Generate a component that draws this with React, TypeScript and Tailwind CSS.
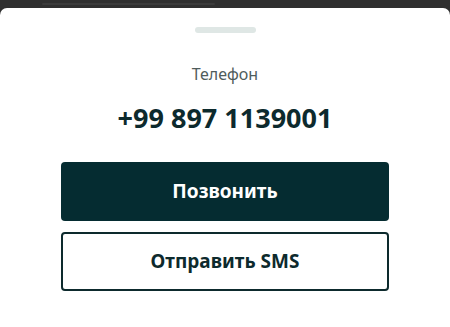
export default function App() {
  return (
    <div
      className="flex h-[327px] w-[450px] flex-col overflow-hidden bg-[#2f2f2f]"
      style={{ fontFamily: '"Noto Sans", sans-serif' }}
    >
      <div className="flex h-[8px] shrink-0 items-start px-[42px] pt-[3px]">
        <div className="h-[2px] w-[173px] rounded-full bg-[#3b3b3b]" />
      </div>
      <div className="flex flex-1 flex-col items-center rounded-t-[7px] bg-white px-[61px]">
        <div className="mt-[19px] h-[6px] w-[61px] rounded-full bg-[#dfe7e5]" />
        <div className="mt-[30px] text-[16px] leading-[22px] text-[#4f5c5b]">Телефон</div>
        <div className="mt-[15px] text-[27px] font-bold leading-[36px] text-[#0d2a2d]">
          +99 897 1139001
        </div>
        <button className="mt-[26px] flex h-[59px] w-full items-center justify-center rounded-[4px] bg-[#052c31] text-[19px] font-bold text-white">
          Позвонить
        </button>
        <button className="mt-[11px] flex h-[59px] w-full items-center justify-center rounded-[4px] border-2 border-[#0d2a2d] bg-white text-[19px] font-bold text-[#0d2a2d]">
          Отправить SMS
        </button>
      </div>
    </div>
  );
}
